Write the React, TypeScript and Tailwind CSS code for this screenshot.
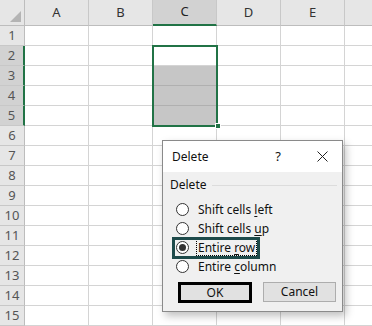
import React from 'react';

const COLS = ['A', 'B', 'C', 'D', 'E', ''];
const ROWS = Array.from({ length: 15 }, (_, i) => i + 1);

const isSelRow = (r: number) => r >= 2 && r <= 5;

// --- Sheet grid ---
const Sheet = () => (
  <div className="flex flex-col">
    <div className="flex h-[26px]">
      <div className="relative w-[25px] shrink-0 bg-[#e6e6e6] border-r border-b border-[#bdbdbd]">
        <div className="absolute right-[3px] bottom-[3px] w-0 h-0 border-l-[11px] border-l-transparent border-b-[11px] border-b-[#b4b4b4]" />
      </div>
      {COLS.map((c, i) => (
        <div
          key={i}
          className={`w-[64px] shrink-0 flex items-center justify-center text-[13px] border-r border-[#c8c8c8] ${
            c === 'C'
              ? 'bg-[#d2d2d2] border-b-2 border-b-[#217346] text-[#222]'
              : 'bg-[#e6e6e6] border-b border-b-[#bdbdbd] text-[#333]'
          }`}
        >
          {c}
        </div>
      ))}
    </div>
    {ROWS.map((r) => (
      <div key={r} className="flex h-[20px]">
        <div
          className={`w-[25px] shrink-0 flex items-center justify-center text-[13px] text-[#555] border-b border-[#c8c8c8] ${
            isSelRow(r)
              ? 'bg-[#d2d2d2] border-r-2 border-r-[#217346]'
              : 'bg-[#e6e6e6] border-r border-r-[#bdbdbd]'
          }`}
        >
          {r}
        </div>
        {COLS.map((c, i) => (
          <div
            key={i}
            className={`w-[64px] shrink-0 border-r border-b border-[#d4d4d4] ${
              c === 'C' && r >= 3 && r <= 5 ? 'bg-[#c6c6c6] border-b-[#b0b0b0]' : 'bg-white'
            }`}
          />
        ))}
      </div>
    ))}
  </div>
);

const Radio = ({ checked }: { checked?: boolean }) => (
  <span className="w-[13px] h-[13px] rounded-full border border-[#333] bg-white flex items-center justify-center shrink-0">
    {checked && <span className="w-[7px] h-[7px] rounded-full bg-[#333]" />}
  </span>
);

const Option = ({ pre, key_, post, checked, focus }: { pre: string; key_: string; post: string; checked?: boolean; focus?: boolean }) => (
  <div className="relative flex items-center h-[19px] gap-[8px]">
    <Radio checked={checked} />
    <span className={`leading-[15px] px-[1px] ${focus ? 'outline outline-1 outline-dotted outline-black' : ''}`}>
      {pre}
      <span className="underline underline-offset-2">{key_}</span>
      {post}
    </span>
    {focus && (
      <div className="absolute left-[-4px] top-[-1px] w-[88px] h-[22px] border-[3px] border-[#1d4a4a]" />
    )}
  </div>
);

// --- Delete dialog ---
const DeleteDialog = () => (
  <div className="absolute left-[162px] top-[140px] w-[181px] h-[172px] border border-[#8a8a8a] bg-[#f0f0f0] shadow-[3px_4px_8px_rgba(0,0,0,0.25)] flex flex-col text-[12px] text-[#111]">
    <div className="h-[31px] bg-white flex items-center pl-[9px] pr-[14px]">
      <span className="grow">Delete</span>
      <span className="mr-[36px] text-[13px]">?</span>
      <svg width="11" height="11" viewBox="0 0 11 11">
        <path d="M0.5 0.5 L10.5 10.5 M10.5 0.5 L0.5 10.5" stroke="#222" strokeWidth="1" />
      </svg>
    </div>
    <div className="flex flex-col pt-[5px]">
      <div className="flex items-center pl-[7px] pr-[5px] h-[16px]">
        <span>Delete</span>
        <div className="grow ml-[5px] h-px bg-[#dcdcdc]" />
      </div>
      <div className="flex flex-col pl-[13px] pt-[7px]">
        <Option pre="Shift cells " key_="l" post="eft" />
        <Option pre="Shift cells " key_="u" post="p" />
        <Option pre="Entire " key_="r" post="ow" checked focus />
        <Option pre="Entire " key_="c" post="olumn" />
      </div>
      <div className="flex pl-[15px] gap-[11px] mt-[6px]">
        <button className="w-[74px] h-[21px] border-[3px] border-black bg-[#e1e1e1] flex items-center justify-center">
          OK
        </button>
        <button className="w-[73px] h-[20px] border border-[#adadad] bg-[#e1e1e1] flex items-center justify-center">
          Cancel
        </button>
      </div>
    </div>
  </div>
);

export default function App() {
  return (
    <div className="relative w-[372px] h-[326px] overflow-hidden bg-white font-['Noto_Sans',sans-serif]">
      <Sheet />
      {/* selection outline C2:C5 */}
      <div className="absolute left-[152px] top-[45px] w-[66px] h-[82px] border-2 border-[#217346]" />
      <div className="absolute left-[215px] top-[123px] w-[6px] h-[6px] bg-[#217346] border border-white" />
      <DeleteDialog />
    </div>
  );
}
